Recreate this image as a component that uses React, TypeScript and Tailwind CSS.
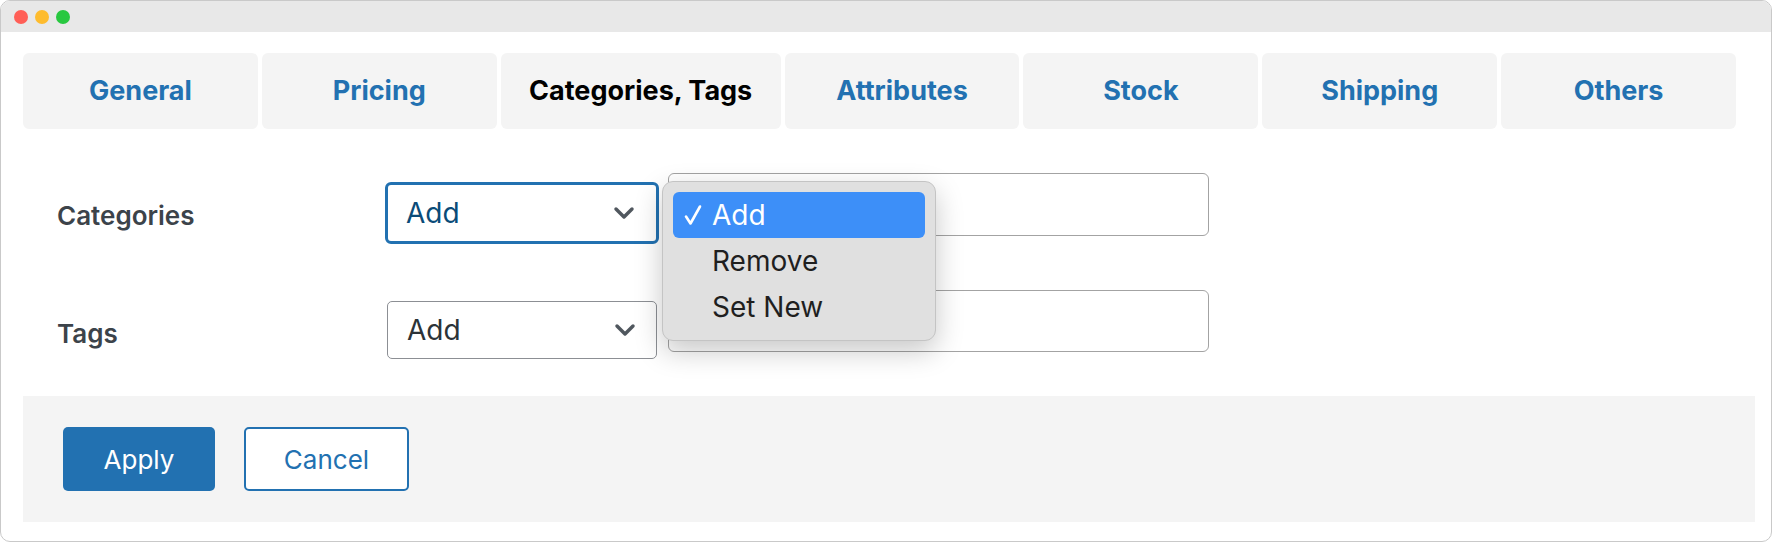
import { ChevronDown } from 'lucide-react';

const TABS = ['General', 'Pricing', 'Categories, Tags', 'Attributes', 'Stock', 'Shipping', 'Others'];
const ACTIVE = 'Categories, Tags';

const font = { fontFamily: 'Inter, "Noto Sans", sans-serif' };

function Select({ focused, children }: { focused?: boolean; children?: React.ReactNode }) {
  return (
    <div
      className={
        focused
          ? 'relative flex h-[62px] w-[274px] items-center rounded-[6px] border-[3px] border-[#2271b1] pl-[18px] pr-[16px] text-[#0a4b78]'
          : 'relative ml-[2px] flex h-[58px] w-[270px] items-center rounded-[5px] border-[1.5px] border-[#8c8f94] pl-[19px] pr-[15px] text-[#2c3338]'
      }>
      <span className="flex-1 text-[28px] leading-none">Add</span>
      <ChevronDown size={32} strokeWidth={2.6} className="text-[#50575e]" />
      {children}
    </div>
  );
}

function OptionMenu() {
  const items = ['Add', 'Remove', 'Set New'];
  return (
    <div className="absolute left-[274px] top-[-4px] z-10 w-[274px] rounded-[11px] border border-[#c4c4c4] bg-[#e0e0e0] px-[10px] py-[10px] shadow-[0_10px_28px_rgba(0,0,0,0.22)]">
      {items.map((item, i) => (
        <div
          key={item}
          className={
            i === 0
              ? 'flex h-[46px] items-center rounded-[6px] bg-[#3d8ff8] pl-[11px] text-[28px] text-white'
              : 'flex h-[46px] items-center pl-[39px] text-[28px] text-[#1f1f1f]'
          }>
          {i === 0 && (
            <svg width="18" height="22" viewBox="0 0 18 22" className="mr-[10px]">
              <path d="M2 12.5 L6.5 19.5 L16 2.5" fill="none" stroke="white" strokeWidth="2.6" strokeLinecap="round" strokeLinejoin="round" />
            </svg>
          )}
          {item}
        </div>
      ))}
    </div>
  );
}

export default function App() {
  return (
    <div style={font} className="h-[542px] w-[1772px] overflow-hidden rounded-[10px] border border-[#c9c9c9] bg-white">
      {/* title bar */}
      <div className="flex h-[31px] items-center gap-[7px] bg-[#e8e8e8] pl-[13px] pt-px">
        <span className="h-[14px] w-[14px] rounded-full bg-[#ff5f57]" />
        <span className="h-[14px] w-[14px] rounded-full bg-[#febc2e]" />
        <span className="h-[14px] w-[14px] rounded-full bg-[#28c840]" />
      </div>

      <div className="pl-[22px] pr-[16px] pt-[21px]">
        {/* tabs */}
        <div className="flex w-[1713px] gap-[4px]">
          {TABS.map(tab => (
            <div
              key={tab}
              className={
                tab === ACTIVE
                  ? 'flex h-[76px] w-[280px] shrink-0 items-center justify-center rounded-[6px] bg-[#f4f4f4] text-[27px] font-bold text-black'
                  : 'flex h-[76px] flex-1 items-center justify-center rounded-[6px] bg-[#f4f4f4] text-[27px] font-bold text-[#2271b1]'
              }>
              {tab}
            </div>
          ))}
        </div>

        {/* fields */}
        <div className="mt-[44px] grid grid-cols-[328px_283px_541px] pl-[34px]">
          <div className="mt-[9px] flex h-[62px] items-center pt-[4px] text-[26px] font-semibold text-[#3c434a]">Categories</div>
          <div className="mt-[9px]">
            <Select focused>
              <OptionMenu />
            </Select>
          </div>
          <div className="h-[63px] rounded-[6px] border-[1.5px] border-[#a3a3a3] bg-white" />

          <div className="mt-[57px] flex h-[58px] items-center pt-[6px] text-[26px] font-semibold text-[#3c434a]">Tags</div>
          <div className="mt-[57px]">
            <Select />
          </div>
          <div className="mt-[46px] h-[62px] rounded-[6px] border-[1.5px] border-[#a3a3a3] bg-white" />
        </div>

        {/* footer */}
        <div className="mt-[37px] flex h-[126px] items-center gap-[29px] bg-[#f4f4f4] pl-[40px]">
          <button
            type="button"
            className="h-[64px] w-[152px] rounded-[5px] bg-[#2271b1] text-[26px] text-white">
            Apply
          </button>
          <button
            type="button"
            className="h-[64px] w-[165px] rounded-[5px] border-[2px] border-[#2271b1] bg-white text-[26px] text-[#2271b1]">
            Cancel
          </button>
        </div>
      </div>
    </div>
  );
}
